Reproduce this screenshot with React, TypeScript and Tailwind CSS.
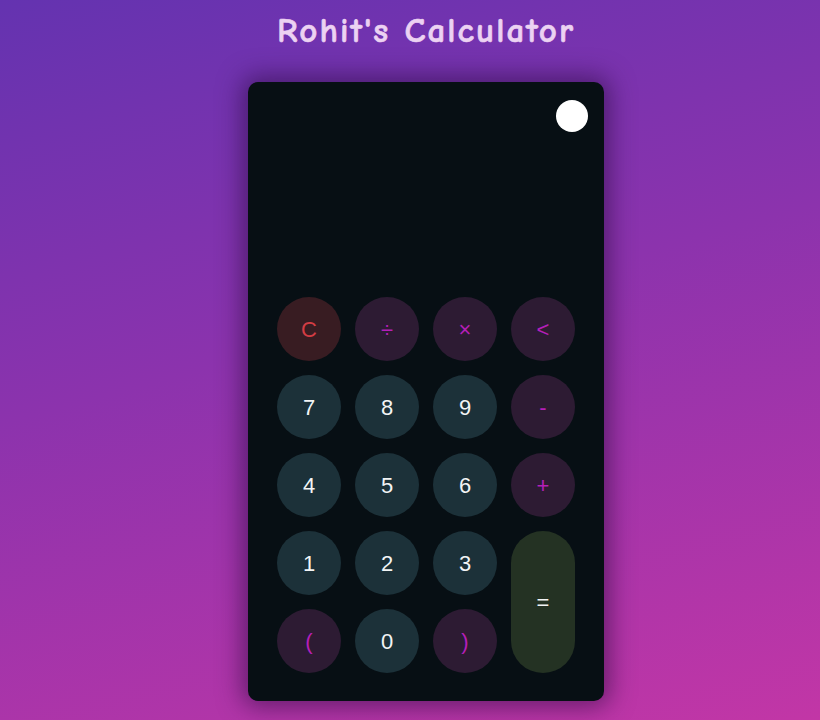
import React from "react";

type Kind = "clear" | "op" | "num" | "eq";

const styles: Record<Kind, string> = {
  clear: "bg-[#381c22] text-[#d23c44]",
  op: "bg-[#2d1b33] text-[#b51fb8]",
  num: "bg-[#1c3139] text-[#f2f4f5]",
  eq: "bg-[#243223] text-[#f2f4f5]",
};

const keys: { label: string; kind: Kind; tall?: boolean }[] = [
  { label: "C", kind: "clear" },
  { label: "÷", kind: "op" },
  { label: "×", kind: "op" },
  { label: "<", kind: "op" },
  { label: "7", kind: "num" },
  { label: "8", kind: "num" },
  { label: "9", kind: "num" },
  { label: "-", kind: "op" },
  { label: "4", kind: "num" },
  { label: "5", kind: "num" },
  { label: "6", kind: "num" },
  { label: "+", kind: "op" },
  { label: "1", kind: "num" },
  { label: "2", kind: "num" },
  { label: "3", kind: "num" },
  { label: "=", kind: "eq", tall: true },
  { label: "(", kind: "op" },
  { label: "0", kind: "num" },
  { label: ")", kind: "op" },
];

export default function App() {
  return (
    <div className="min-h-[720px] w-full bg-[linear-gradient(165deg,#6433b0_0%,#8c33ad_45%,#c236a6_100%)] pl-[32px] flex flex-col items-center">
      <h1 className="mt-[11px] text-[35px] leading-[40px] font-black text-[#ecd2f2] [font-family:'Comic_Sans_MS','Comic_Neue','DejaVu_Sans',cursive] tracking-[2px] [-webkit-text-stroke:0.6px_#ecd2f2]">
        Rohit's Calculator
      </h1>
      <div className="mt-[31px] w-[356px] h-[619px] rounded-[10px] bg-[#070f14] shadow-[0_0_24px_6px_rgba(40,10,60,0.55)] flex flex-col px-[29px] pb-[28px] pt-[18px]">
        <div className="flex justify-end -mr-[13px]">
          <div className="w-[32px] h-[32px] rounded-full bg-white" />
        </div>
        <div className="flex-1" />
        <div className="grid grid-cols-[repeat(4,64px)] auto-rows-[64px] gap-[14px] [font-family:'Liberation_Sans',Arial,sans-serif]">
          {keys.map((k) => (
            <button
              key={k.label}
              className={`${styles[k.kind]} ${
                k.tall ? "row-span-2 col-start-4 row-start-4 rounded-[32px]" : "rounded-full"
              } flex items-center justify-center text-[22px]`}
            >
              {k.label}
            </button>
          ))}
        </div>
      </div>
    </div>
  );
}
